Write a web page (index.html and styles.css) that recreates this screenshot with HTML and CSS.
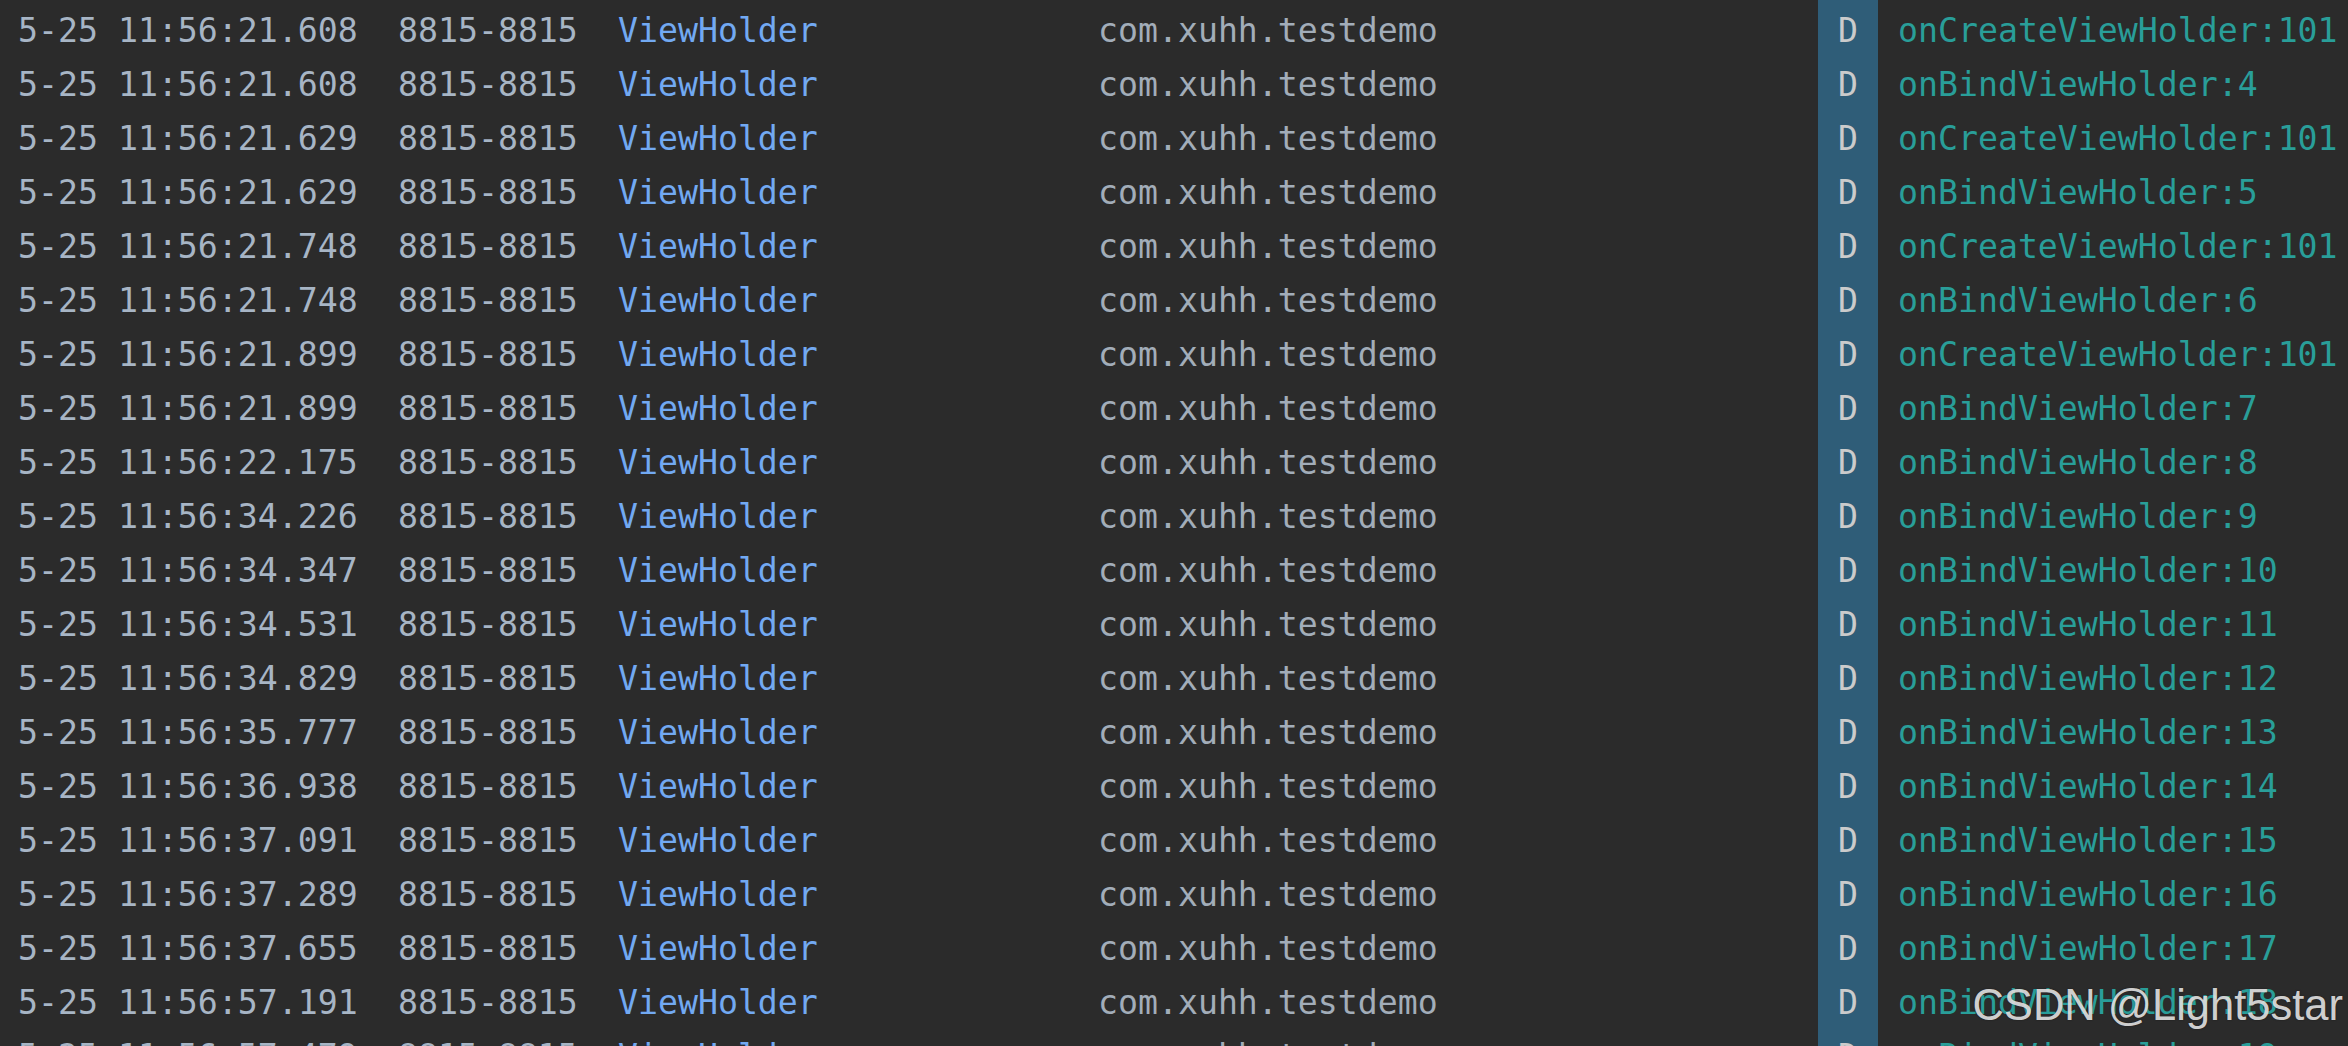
FILE: index.html
```html
<!DOCTYPE html>
<html lang="en">
<head>
<meta charset="utf-8">
<title>Logcat</title>
<link rel="stylesheet" href="styles.css">
</head>
<body>
<div class="logcat">
  <div class="row"><span class="time">5-25 11:56:21.608</span><span class="pid">8815-8815</span><span class="tag">ViewHolder</span><span class="pkg">com.xuhh.testdemo</span><span class="level">D</span><span class="msg">onCreateViewHolder:101</span></div>
  <div class="row"><span class="time">5-25 11:56:21.608</span><span class="pid">8815-8815</span><span class="tag">ViewHolder</span><span class="pkg">com.xuhh.testdemo</span><span class="level">D</span><span class="msg">onBindViewHolder:4</span></div>
  <div class="row"><span class="time">5-25 11:56:21.629</span><span class="pid">8815-8815</span><span class="tag">ViewHolder</span><span class="pkg">com.xuhh.testdemo</span><span class="level">D</span><span class="msg">onCreateViewHolder:101</span></div>
  <div class="row"><span class="time">5-25 11:56:21.629</span><span class="pid">8815-8815</span><span class="tag">ViewHolder</span><span class="pkg">com.xuhh.testdemo</span><span class="level">D</span><span class="msg">onBindViewHolder:5</span></div>
  <div class="row"><span class="time">5-25 11:56:21.748</span><span class="pid">8815-8815</span><span class="tag">ViewHolder</span><span class="pkg">com.xuhh.testdemo</span><span class="level">D</span><span class="msg">onCreateViewHolder:101</span></div>
  <div class="row"><span class="time">5-25 11:56:21.748</span><span class="pid">8815-8815</span><span class="tag">ViewHolder</span><span class="pkg">com.xuhh.testdemo</span><span class="level">D</span><span class="msg">onBindViewHolder:6</span></div>
  <div class="row"><span class="time">5-25 11:56:21.899</span><span class="pid">8815-8815</span><span class="tag">ViewHolder</span><span class="pkg">com.xuhh.testdemo</span><span class="level">D</span><span class="msg">onCreateViewHolder:101</span></div>
  <div class="row"><span class="time">5-25 11:56:21.899</span><span class="pid">8815-8815</span><span class="tag">ViewHolder</span><span class="pkg">com.xuhh.testdemo</span><span class="level">D</span><span class="msg">onBindViewHolder:7</span></div>
  <div class="row"><span class="time">5-25 11:56:22.175</span><span class="pid">8815-8815</span><span class="tag">ViewHolder</span><span class="pkg">com.xuhh.testdemo</span><span class="level">D</span><span class="msg">onBindViewHolder:8</span></div>
  <div class="row"><span class="time">5-25 11:56:34.226</span><span class="pid">8815-8815</span><span class="tag">ViewHolder</span><span class="pkg">com.xuhh.testdemo</span><span class="level">D</span><span class="msg">onBindViewHolder:9</span></div>
  <div class="row"><span class="time">5-25 11:56:34.347</span><span class="pid">8815-8815</span><span class="tag">ViewHolder</span><span class="pkg">com.xuhh.testdemo</span><span class="level">D</span><span class="msg">onBindViewHolder:10</span></div>
  <div class="row"><span class="time">5-25 11:56:34.531</span><span class="pid">8815-8815</span><span class="tag">ViewHolder</span><span class="pkg">com.xuhh.testdemo</span><span class="level">D</span><span class="msg">onBindViewHolder:11</span></div>
  <div class="row"><span class="time">5-25 11:56:34.829</span><span class="pid">8815-8815</span><span class="tag">ViewHolder</span><span class="pkg">com.xuhh.testdemo</span><span class="level">D</span><span class="msg">onBindViewHolder:12</span></div>
  <div class="row"><span class="time">5-25 11:56:35.777</span><span class="pid">8815-8815</span><span class="tag">ViewHolder</span><span class="pkg">com.xuhh.testdemo</span><span class="level">D</span><span class="msg">onBindViewHolder:13</span></div>
  <div class="row"><span class="time">5-25 11:56:36.938</span><span class="pid">8815-8815</span><span class="tag">ViewHolder</span><span class="pkg">com.xuhh.testdemo</span><span class="level">D</span><span class="msg">onBindViewHolder:14</span></div>
  <div class="row"><span class="time">5-25 11:56:37.091</span><span class="pid">8815-8815</span><span class="tag">ViewHolder</span><span class="pkg">com.xuhh.testdemo</span><span class="level">D</span><span class="msg">onBindViewHolder:15</span></div>
  <div class="row"><span class="time">5-25 11:56:37.289</span><span class="pid">8815-8815</span><span class="tag">ViewHolder</span><span class="pkg">com.xuhh.testdemo</span><span class="level">D</span><span class="msg">onBindViewHolder:16</span></div>
  <div class="row"><span class="time">5-25 11:56:37.655</span><span class="pid">8815-8815</span><span class="tag">ViewHolder</span><span class="pkg">com.xuhh.testdemo</span><span class="level">D</span><span class="msg">onBindViewHolder:17</span></div>
  <div class="row"><span class="time">5-25 11:56:57.191</span><span class="pid">8815-8815</span><span class="tag">ViewHolder</span><span class="pkg">com.xuhh.testdemo</span><span class="level">D</span><span class="msg">onBindViewHolder:18</span></div>
  <div class="row"><span class="time">5-25 11:56:57.479</span><span class="pid">8815-8815</span><span class="tag">ViewHolder</span><span class="pkg">com.xuhh.testdemo</span><span class="level">D</span><span class="msg">onBindViewHolder:19</span></div>
</div>
<div class="watermark">CSDN @Light5star</div>
</body>
</html>
```
FILE: styles.css
```css
html, body {
  margin: 0;
  padding: 0;
  height: 100%;
  overflow: hidden;
  background: #2b2b2b;
}

.logcat {
  height: 1046px;
  overflow: hidden;
  font-family: "DejaVu Sans Mono", "Liberation Mono", monospace;
  font-size: 33.2px;
}

.row {
  display: grid;
  grid-template-columns: 380px 220px 480px 720px 60px 1fr;
  height: 54px;
  padding-left: 18px;
}

.row > span {
  padding-top: 7px;
  line-height: 47px;
  white-space: pre;
}

.time,
.pid {
  color: #a7b5c5;
}

.tag {
  color: #72a9f2;
}

.pkg {
  color: #a2adb9;
}

.level {
  background: #2f5d78;
  color: #cbcbcb;
  text-align: center;
}

.msg {
  color: #299e99;
  padding-left: 20px;
}

.watermark {
  position: absolute;
  top: 983px;
  right: 5px;
  font-family: "Liberation Sans", Arial, sans-serif;
  font-size: 43.5px;
  line-height: 44px;
  color: rgba(232, 232, 232, 0.9);
  text-shadow: 0 0 2px rgba(0, 0, 0, 0.4);
  white-space: pre;
}
```
